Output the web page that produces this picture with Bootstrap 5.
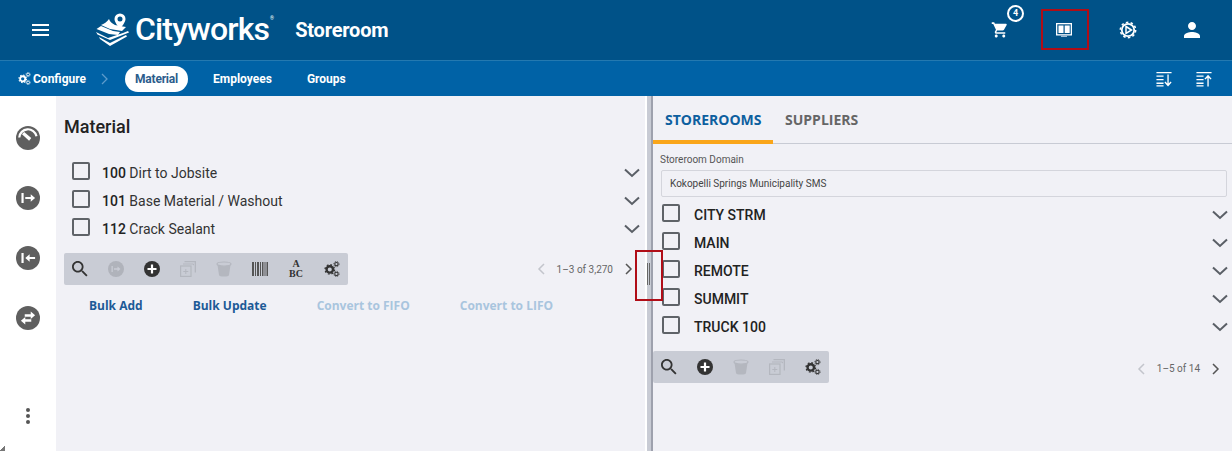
<!DOCTYPE html>
<html lang="en"><head><meta charset="utf-8"><title>Cityworks Storeroom</title>
<link href="https://cdn.jsdelivr.net/npm/bootstrap@5.3.0/dist/css/bootstrap.min.css" rel="stylesheet">
<style>
html,body{height:451px;overflow:hidden}
body{font-family:Roboto,sans-serif;background:#f1f1f6;color:#333;position:relative;font-size:14px}
svg{display:block;flex:none}
.top{height:61px;background:#005288;color:#fff;border-bottom:1px solid #2479b0}
.menu-btn{width:18px;margin-left:32px;margin-right:46px}
.logo{width:40px;height:34px;margin-right:-1px}
.brand{font:500 32px/1 Roboto,sans-serif;letter-spacing:-.85px;margin-top:-2px}
.brand sup{font-size:5px;top:-20px;margin-left:1px}
.app{font:700 20px/1 Roboto,sans-serif;margin-left:22px;letter-spacing:-.2px}
.tool{width:24px;position:relative}
.cart-n{position:absolute;left:19px;top:-16px;width:17px;height:17px;border:2px solid #fff;border-radius:50%;font:700 9px/13px Roboto,sans-serif;text-align:center}
.sub{height:35px;background:#0062a6;color:#fff;font-weight:700;font-size:12px}
.conf{margin-left:18px;gap:2px;width:67px}
.pill{background:#fff;color:#2c5d8c;border-radius:13px;padding:0 10px;line-height:26px;margin-left:16px;letter-spacing:-.2px}
.sub-link{margin-left:25px}
.main{height:355px}
.rail{width:56px;background:#fff;padding-top:30px}
.rail-i{width:24px;height:24px;margin-bottom:36px;margin-left:16px}
.dots{margin-top:78px;margin-left:26px;width:5px}
.dots i{display:block;width:4px;height:4px;border-radius:50%;background:#555;margin-bottom:2px}
.left{width:589px;padding:0 0 0 8px}
.split{width:8px;background:#c8cbd4;border-left:2px solid #fff;border-right:2px solid #9ea1ad;position:relative}
.right{flex:1;min-width:0}
.title{font:500 18px/22px Roboto,sans-serif;color:#222;margin:20px 0 21px}
.rowi{height:28px}
.box{width:18px;height:18px;border:2px solid #5f6368;border-radius:2px;flex:none}
.left .box{margin-left:8px;margin-right:12px;margin-top:-5px}
.left .rowi{font-size:14px;padding-right:5px}
.left .rowi span{color:#333;padding-top:1px}
.left .rowi b{font-weight:500;color:#222}
.chev{margin-left:auto}
.bar{background:#c9ccd5;height:32px;border-radius:2px;padding-left:8px;gap:20px}
.pag{font-size:10px;color:#666}
.lbtns{font:700 12px/16px "Open Sans",sans-serif;color:#1d5a96;padding:13px 0 0 25px;gap:50px}
.lbtns .off{color:#a9c5de}
.tabs-r{height:48px;border-bottom:1px solid #c8cbd4;font:700 14px/1 "Open Sans",sans-serif}
.tab1{color:#0d5f9f;width:120px;height:48px;border-bottom:4px solid #faa61a;padding:17px 0 0 12px}
.tab2{color:#666;padding:17px 0 0 12px}
.dom-l{font-size:10px;color:#555;margin:10px 0 0 7px;line-height:12px}
.dom{margin:4px 5px 4px 8px;height:27px;border:1px solid #d4d5dc;border-radius:2px;font-size:10px;line-height:26px;padding-left:8px;color:#444}
.right .rowi{font-weight:500;font-size:14px;color:#222;padding-right:4px}
.right .box{margin-left:9px;margin-right:14px;margin-top:-5px}
.rbar{width:176px;margin-top:10px;padding-left:8px}
.note-box{position:absolute;border:2px solid #b00d17;pointer-events:none}
.corner{position:absolute;left:0;bottom:0;width:5px;height:5px;background:linear-gradient(135deg,transparent 50%,#777 50%)}
.abc{width:16px;font:700 10px/10px 'Liberation Serif',serif;color:#333}
</style></head><body>
<svg width="0" height="0" style="position:absolute"><defs>
<symbol id="search" viewBox="3 3 18 18"><path d="M15.5 14h-.79l-.28-.27C15.41 12.59 16 11.11 16 9.5 16 5.91 13.09 3 9.5 3S3 5.91 3 9.5 5.91 16 9.5 16c1.61 0 3.09-.59 4.23-1.57l.27.28v.79l5 4.99L20.49 19l-4.99-5zm-6 0C7.01 14 5 11.99 5 9.5S7.01 5 9.5 5 14 7.01 14 9.5 11.99 14 9.5 14z"/></symbol>
<symbol id="plus" viewBox="0 0 16 16"><circle cx="8" cy="8" r="8"/><path d="M3.500 6.900h3.400V3.500h2.200v3.400h3.400v2.200H9.100v3.400H6.900V9.100H3.500z" fill="#fff"/></symbol>
<symbol id="trash" viewBox="0 0 16 16"><ellipse cx="8" cy="3" rx="7" ry="2" fill="none" stroke="currentColor" stroke-width="1.2"/><path d="M1.5 4 3 14c.2 1 2 1.6 5 1.6s4.800-.6 5-1.600L14.500 4C12 5.500 4 5.500 1.500 4z"/></symbol>
<symbol id="copy" viewBox="0 0 16 16"><path d="M4.500.5h11v11" fill="none" stroke="currentColor" stroke-width="1.600"/><path d="M3 3h10.500v1.200" fill="none" stroke="currentColor"/><rect x=".6" y="5" width="10.400" height="10.400" fill="none" stroke="currentColor" stroke-width="1.200"/><path d="M5.800 8v5M3.300 10.500h5" stroke="currentColor" fill="none"/></symbol>
<symbol id="gears" viewBox="0 0 18 18"><circle cx="6.500" cy="9.500" r="3.600" fill="none" stroke="currentColor" stroke-width="2.600"/><circle cx="6.500" cy="9.500" r="5.300" fill="none" stroke="currentColor" stroke-width="1.500" stroke-dasharray="2 2.160"/><circle cx="14" cy="3.500" r="1.900" fill="none" stroke="currentColor" stroke-width="1.200"/><circle cx="14" cy="3.500" r="3" fill="none" stroke="currentColor" stroke-width=".9" stroke-dasharray="1.300 1.060"/><circle cx="14" cy="14.500" r="1.900" fill="none" stroke="currentColor" stroke-width="1.200"/><circle cx="14" cy="14.500" r="3" fill="none" stroke="currentColor" stroke-width=".9" stroke-dasharray="1.300 1.060"/></symbol>
<symbol id="chev" viewBox="0 0 16 10"><path d="M1 1.500 8 8l7-6.500" fill="none" stroke="#5a5f66" stroke-width="2"/></symbol>
</defs></svg>

<header class="top d-flex align-items-center">
  <svg class="menu-btn" height="12" viewBox="0 0 18 12"><path d="M0 0h17v2H0zM0 5h17v2H0zM0 10h17v2H0z" fill="#fff"/></svg>
  <svg class="logo" viewBox="0 0 40 34" fill="#fff"><path transform="translate(3 0)" d="M21 .5a5.500 5.500 0 0 1 5.500 5.500c0 3-3.500 7.500-5.500 10-2-2.500-5.500-7-5.500-10A5.500 5.500 0 0 1 21 .5zm0 3a2.500 2.500 0 1 0 0 5 2.500 2.500 0 0 0 0-5z"/><path d="M13 6c-2 3-5 5-8 6l9 4 12 2 4-4-6-1-5-1c-3-1.500-5-3-6-6zM.5 16 5 13l12 5 7 1-2 3-9-1z"/><path d="M0 19l12 6 15-5 5-2 1 1.500L14 27 1.500 21.500zM3 24l11 6 16-8 1 1.500L14 33 4 26z"/></svg>
  <div class="brand">Cityworks<sup>®</sup></div>
  <div class="app">Storeroom</div>
  <div class="d-flex ms-auto align-items-center" style="gap:40px;margin-right:28px">
    <div class="tool"><svg width="18" height="18" viewBox="0 0 24 24" fill="#fff" class="mx-auto"><path d="M7 18c-1.100 0-1.990.9-1.990 2S5.900 22 7 22s2-.9 2-2-.9-2-2-2zM1 2v2h2l3.600 7.590-1.350 2.450c-.16.280-.25.610-.25.960 0 1.100.9 2 2 2h12v-2H7.420c-.14 0-.25-.11-.25-.25l.03-.12.9-1.830h7.450c.750 0 1.410-.41 1.750-1.030l3.580-6.490c.08-.14.120-.31.120-.48 0-.550-.45-1-1-1H5.210l-.94-2H1zm16 16c-1.100 0-1.990.9-1.990 2s.89 2 1.990 2 2-.9 2-2-.9-2-2-2z"/></svg><span class="cart-n">4</span></div>
    <div class="tool"><svg width="18" height="18" viewBox="0 0 18 18" class="mx-auto"><path d="M1 2h16v12.500H1z" fill="#fff"/><path d="M2.300 3.300h13.400v9.900H2.300z" fill="#005288"/><path d="M3.500 4.500h5v7.500h-5zM9.700 4.500h5v7.500h-5z" fill="#fff"/><path d="M6 14.500h6V16H6z" fill="#9dbdd6"/></svg></div>
    <div class="tool"><svg width="18" height="18" viewBox="0 0 18 18" class="mx-auto"><circle cx="9" cy="9" r="6.200" fill="none" stroke="#fff" stroke-width="1.800"/><circle cx="9" cy="9" r="7.700" fill="none" stroke="#fff" stroke-width="1.500" stroke-dasharray="2.500 2.340"/><path d="M7 5.500 12.500 9 7 12.500z" fill="none" stroke="#fff" stroke-width="1.500"/></svg></div>
    <div class="tool"><svg width="24" height="24" viewBox="0 0 24 24" fill="#fff" class="mx-auto"><path d="M12 12c2.210 0 4-1.790 4-4s-1.790-4-4-4-4 1.790-4 4 1.790 4 4 4zm0 2c-2.670 0-8 1.340-8 4v2h16v-2c0-2.660-5.330-4-8-4z"/></svg></div>
  </div>
</header>

<nav class="sub d-flex align-items-center">
  <div class="conf d-flex align-items-center"><svg width="13" height="13" style="color:#fff"><use href="#gears"/></svg><span>Configure</span></div>
  <svg width="8" height="12" viewBox="0 0 8 12" style="margin-left:16px"><path d="M1 1l5 5-5 5" fill="none" stroke="#5c9bcb" stroke-width="1.300"/></svg>
  <span class="pill">Material</span>
  <span class="sub-link">Employees</span>
  <span class="sub-link" style="margin-left:35px">Groups</span>
  <div class="d-flex ms-auto" style="gap:24px;margin-right:20px">
    <svg width="16" height="16" viewBox="0 0 17 18" fill="#fff"><path d="M0 1h17v1.500H0zM0 5h8v1.500H0zM0 9h8v1.500H0zM0 13h8v1.500H0zM0 16h8v1.500H0zM12.300 4h1.500v10l2.200-2.200 1 1-3.950 4.700L9 12.800l1-1 2.300 2.200z"/></svg>
    <svg width="16" height="16" viewBox="0 0 17 18" fill="#fff"><path d="M0 1h17v1.500H0zM0 5h8v1.500H0zM0 9h8v1.500H0zM0 13h8v1.500H0zM0 16h8v1.500H0zM12.300 17.500h1.500V7.500l2.200 2.200 1-1-3.950-4.500L9 8.700l1 1 2.300-2.200z"/></svg>
  </div>
</nav>

<main class="main d-flex">
  <aside class="rail">
    <svg class="rail-i d-block" viewBox="0 0 22 22"><circle cx="11" cy="11" r="11" fill="#5f5f5f"/><path d="M3 10.500A8 8 0 0 1 18.800 9.300" fill="none" stroke="#fff" stroke-width="2"/><path d="M5.500 7.500 7.500 5.500 14 11 12 13.500z" fill="#fff"/></svg>
    <svg class="rail-i d-block" viewBox="0 0 22 22"><circle cx="11" cy="11" r="11" fill="#5f5f5f"/><path d="M5 6.500h2v9H5zM8.500 10h5V7.500l4 3.500-4 3.500V12h-5z" fill="#fff"/></svg>
    <svg class="rail-i d-block" viewBox="0 0 22 22"><circle cx="11" cy="11" r="11" fill="#5f5f5f"/><path d="M5 6.500h2v9H5zM17.500 10h-5V7.500l-4 3.500 4 3.500V12h5z" fill="#fff"/></svg>
    <svg class="rail-i d-block" viewBox="0 0 22 22"><circle cx="11" cy="11" r="11" fill="#5f5f5f"/><path d="M8 7.500h5.500V5l4 3.500-4 3.500V9.800H8zM14 14.500H8.500V17l-4-3.500 4-3.500v2.200H14z" fill="#fff"/></svg>
    <div class="dots"><i></i><i></i><i></i></div>
  </aside>

  <section class="left">
    <h1 class="title">Material</h1>
    <div class="rowi d-flex align-items-center"><div class="box"></div><span><b>100</b> Dirt to Jobsite</span><svg class="chev" width="16" height="10"><use href="#chev"/></svg></div>
    <div class="rowi d-flex align-items-center"><div class="box"></div><span><b>101</b> Base Material / Washout</span><svg class="chev" width="16" height="10"><use href="#chev"/></svg></div>
    <div class="rowi d-flex align-items-center"><div class="box"></div><span><b>112</b> Crack Sealant</span><svg class="chev" width="16" height="10"><use href="#chev"/></svg></div>
    <div class="d-flex align-items-center" style="margin-top:10px">
      <div class="bar d-flex align-items-center" style="width:284px">
        <svg width="16" height="16" fill="#333"><use href="#search"/></svg>
        <svg width="16" height="16" viewBox="0 0 16 16"><circle cx="8" cy="8" r="8" fill="#b0b3bb"/><path d="M3.500 5h1.300v6H3.500zM6 7.300h3.500V5.500L12.500 8l-3 2.500V8.700H6z" fill="#c9ccd5"/></svg>
        <svg width="16" height="16" fill="#333"><use href="#plus"/></svg>
        <svg width="16" height="16" style="color:#b4b7bf"><use href="#copy"/></svg>
        <svg width="16" height="16" style="color:#b4b7bf;fill:#b4b7bf"><use href="#trash"/></svg>
        <svg width="16" height="14" viewBox="0 0 16 14"><path d="M0 0h2v14H0zM3 0h1v14H3zM5 0h2v14H5zM8 0h1v14H8zM10 0h1.500v14H10zM12.500 0h1v14h-1zM14.500 0h1.500v14h-1.500z" fill="#555"/></svg>
        <div class="abc text-center">A<br>BC</div>
        <svg width="16" height="16" style="color:#333"><use href="#gears"/></svg>
      </div>
      <div class="d-flex align-items-center ms-auto pag" style="margin-right:12px">
        <svg width="8" height="12" viewBox="0 0 8 12" style="margin-right:12px"><path d="M7 1 2 6l5 5" fill="none" stroke="#c3c5cc" stroke-width="1.500"/></svg>
        <span>1–3 of 3,270</span>
        <svg width="8" height="12" viewBox="0 0 8 12" style="margin-left:12px"><path d="M1 1l5 5-5 5" fill="none" stroke="#555" stroke-width="1.500"/></svg>
      </div>
    </div>
    <div class="lbtns d-flex"><span>Bulk Add</span><span>Bulk Update</span><span class="off">Convert to FIFO</span><span class="off">Convert to LIFO</span></div>
  </section>

  <div class="split"></div>

  <section class="right">
    <div class="tabs-r d-flex"><div class="tab1">STOREROOMS</div><div class="tab2">SUPPLIERS</div></div>
    <div class="dom-l">Storeroom Domain</div>
    <div class="dom">Kokopelli Springs Municipality SMS</div>
    <div class="rowi d-flex align-items-center"><div class="box"></div><span>CITY STRM</span><svg class="chev" width="16" height="10"><use href="#chev"/></svg></div>
    <div class="rowi d-flex align-items-center"><div class="box"></div><span>MAIN</span><svg class="chev" width="16" height="10"><use href="#chev"/></svg></div>
    <div class="rowi d-flex align-items-center"><div class="box"></div><span>REMOTE</span><svg class="chev" width="16" height="10"><use href="#chev"/></svg></div>
    <div class="rowi d-flex align-items-center"><div class="box"></div><span>SUMMIT</span><svg class="chev" width="16" height="10"><use href="#chev"/></svg></div>
    <div class="rowi d-flex align-items-center"><div class="box"></div><span>TRUCK 100</span><svg class="chev" width="16" height="10"><use href="#chev"/></svg></div>
    <div class="d-flex align-items-start">
      <div class="bar rbar d-flex align-items-center">
        <svg width="16" height="16" fill="#333"><use href="#search"/></svg>
        <svg width="16" height="16" fill="#333"><use href="#plus"/></svg>
        <svg width="16" height="16" style="color:#b4b7bf;fill:#b4b7bf"><use href="#trash"/></svg>
        <svg width="16" height="16" style="color:#b4b7bf"><use href="#copy"/></svg>
        <svg width="16" height="16" style="color:#333"><use href="#gears"/></svg>
      </div>
      <div class="d-flex align-items-center ms-auto pag" style="margin-right:12px;margin-top:20px">
        <svg width="8" height="12" viewBox="0 0 8 12" style="margin-right:12px"><path d="M7 1 2 6l5 5" fill="none" stroke="#c3c5cc" stroke-width="1.500"/></svg>
        <span>1–5 of 14</span>
        <svg width="8" height="12" viewBox="0 0 8 12" style="margin-left:12px"><path d="M1 1l5 5-5 5" fill="none" stroke="#555" stroke-width="1.500"/></svg>
      </div>
    </div>
  </section>
</main>

<svg class="position-absolute" style="left:647px;top:263px" width="4" height="22" viewBox="0 0 4 22"><path d="M.5 0v22M2.500 0v22" stroke="#666" fill="none"/></svg>
<div class="note-box" style="left:1041px;top:9px;width:48px;height:41px"></div>
<div class="note-box" style="left:635px;top:250px;width:28px;height:51px"></div>
<div class="corner"></div>
</body></html>
